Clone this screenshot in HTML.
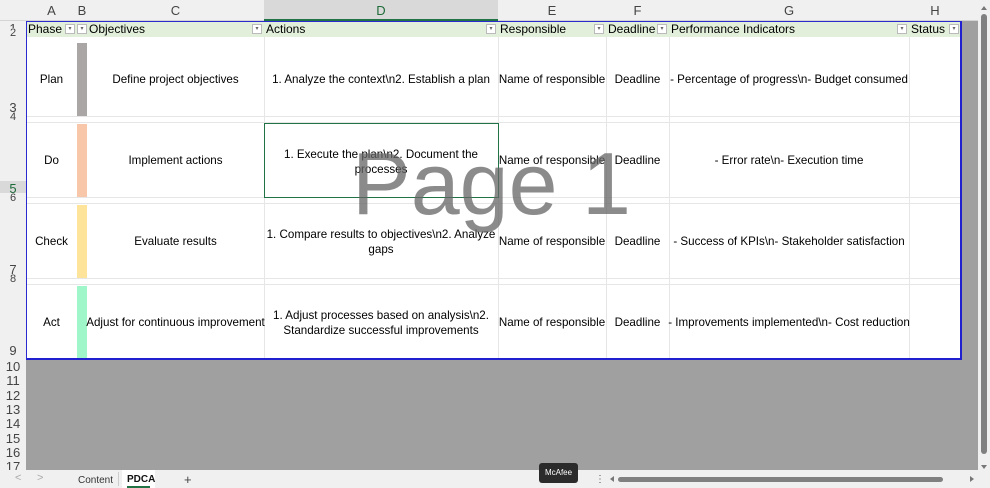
<!DOCTYPE html>
<html><head><meta charset="utf-8"><style>
*{margin:0;padding:0;box-sizing:border-box}
body{width:990px;height:488px;overflow:hidden;background:#fff;font-family:"Liberation Sans",Arial,sans-serif;font-size:12px;color:#000;position:relative}
.a{position:absolute}
.ch{top:0;height:21px;background:#f0f0f0;border-bottom:1px solid #d4d4d4;color:#444;font-size:13px;text-align:center;line-height:22px}
.rh{left:0;width:26px;color:#444;font-size:13px;text-align:center;background:#f0f0f0}
.hd{top:21px;height:16px;background:#e2efda;line-height:16px;font-size:12px;padding-left:2px;white-space:nowrap;overflow:hidden}
.dd{position:absolute;right:2px;top:3px;width:10px;height:10px;border:1px solid #bbb;background:#fff;font-size:6px;line-height:8px;text-align:center;color:#666}
.c{display:flex;align-items:center;justify-content:center;text-align:center;line-height:15px;font-size:11.6px;white-space:nowrap}
.vl{top:37px;height:322px;width:1px;background:#e6e6e6}
.hl{left:26px;width:935px;height:1px;background:#e6e6e6}
</style></head><body>
<div class="a ch" style="left:0;width:990px"></div>
<div class="a ch" style="left:26px;width:51px">A</div>
<div class="a ch" style="left:77px;width:10px">B</div>
<div class="a ch" style="left:87px;width:177px">C</div>
<div class="a ch" style="left:264px;width:234px;background:#d9d9d9;color:#1e6b3a;border-bottom:2px solid #217346">D</div>
<div class="a ch" style="left:498px;width:108px">E</div>
<div class="a ch" style="left:606px;width:63px">F</div>
<div class="a ch" style="left:669px;width:240px">G</div>
<div class="a ch" style="left:909px;width:52px">H</div>
<div class="a rh" style="top:21px;height:448px"></div>
<div class="a rh" style="top:21px;height:16px;line-height:16px">1</div>
<div class="a rh" style="top:28px;height:10px;line-height:10px;font-size:11px;overflow:hidden">2</div>
<div class="a rh" style="top:100px;height:16px;line-height:16px">3</div>
<div class="a rh" style="top:112px;height:10px;line-height:10px;font-size:11px;overflow:hidden">4</div>
<div class="a rh" style="top:181px;height:16px;line-height:16px;background:#d9d9d9;color:#1e6b3a">5</div>
<div class="a rh" style="top:193px;height:10px;line-height:10px;font-size:11px;overflow:hidden">6</div>
<div class="a rh" style="top:262px;height:16px;line-height:16px">7</div>
<div class="a rh" style="top:274px;height:10px;line-height:10px;font-size:11px;overflow:hidden">8</div>
<div class="a rh" style="top:343px;height:16px;line-height:16px">9</div>
<div class="a rh" style="top:360px;height:14px;line-height:14px">10</div>
<div class="a rh" style="top:374px;height:14px;line-height:14px">11</div>
<div class="a rh" style="top:389px;height:14px;line-height:14px">12</div>
<div class="a rh" style="top:403px;height:14px;line-height:14px">13</div>
<div class="a rh" style="top:417px;height:14px;line-height:14px">14</div>
<div class="a rh" style="top:432px;height:14px;line-height:14px">15</div>
<div class="a rh" style="top:446px;height:14px;line-height:14px">16</div>
<div class="a rh" style="top:460px;height:10px;line-height:14px;overflow:hidden">17</div>
<div class="a" style="left:26px;top:360px;width:952px;height:110px;background:#a0a0a0"></div>
<div class="a" style="left:961px;top:21px;width:17px;height:340px;background:#a0a0a0"></div>
<div class="a hd" style="left:26px;width:51px">Phase<span class="dd">▾</span></div>
<div class="a hd" style="left:77px;width:10px"><span class="dd" style="right:0">▾</span></div>
<div class="a hd" style="left:87px;width:177px">Objectives<span class="dd">▾</span></div>
<div class="a hd" style="left:264px;width:234px">Actions<span class="dd">▾</span></div>
<div class="a hd" style="left:498px;width:108px">Responsible<span class="dd">▾</span></div>
<div class="a hd" style="left:606px;width:63px">Deadline<span class="dd">▾</span></div>
<div class="a hd" style="left:669px;width:240px">Performance Indicators<span class="dd">▾</span></div>
<div class="a hd" style="left:909px;width:52px">Status<span class="dd">▾</span></div>
<div class="a vl" style="left:264px"></div>
<div class="a vl" style="left:498px"></div>
<div class="a vl" style="left:606px"></div>
<div class="a vl" style="left:669px"></div>
<div class="a vl" style="left:909px"></div>
<div class="a hl" style="top:116px"></div><div class="a hl" style="top:122px"></div>
<div class="a hl" style="top:197px"></div><div class="a hl" style="top:203px"></div>
<div class="a hl" style="top:278px"></div><div class="a hl" style="top:284px"></div>
<div class="a" style="left:77px;top:43px;width:10px;height:73px;background:#aaa6a6"></div>
<div class="a" style="left:77px;top:124px;width:10px;height:73px;background:#f8c6a8"></div>
<div class="a" style="left:77px;top:205px;width:10px;height:73px;background:#fde49a"></div>
<div class="a" style="left:77px;top:286px;width:10px;height:73px;background:#9ff7c9"></div>

<div class="a c" style="left:26px;top:43px;width:51px;height:73px">Plan</div>
<div class="a c" style="left:87px;top:43px;width:177px;height:73px">Define project objectives</div>
<div class="a c" style="left:264px;top:43px;width:234px;height:73px">1. Analyze the context\n2. Establish a plan</div>
<div class="a c" style="left:498px;top:43px;width:108px;height:73px">Name of responsible</div>
<div class="a c" style="left:606px;top:43px;width:63px;height:73px">Deadline</div>
<div class="a c" style="left:669px;top:43px;width:240px;height:73px">- Percentage of progress\n- Budget consumed</div>

<div class="a c" style="left:26px;top:124px;width:51px;height:73px">Do</div>
<div class="a c" style="left:87px;top:124px;width:177px;height:73px">Implement actions</div>
<div class="a c" style="left:264px;top:124px;width:234px;height:73px;align-items:flex-start;padding-top:23px">1. Execute the plan\n2. Document the<br>processes</div>
<div class="a c" style="left:498px;top:124px;width:108px;height:73px">Name of responsible</div>
<div class="a c" style="left:606px;top:124px;width:63px;height:73px">Deadline</div>
<div class="a c" style="left:669px;top:124px;width:240px;height:73px">- Error rate\n- Execution time</div>

<div class="a c" style="left:26px;top:205px;width:51px;height:73px">Check</div>
<div class="a c" style="left:87px;top:205px;width:177px;height:73px">Evaluate results</div>
<div class="a c" style="left:264px;top:205px;width:234px;height:73px">1. Compare results to objectives\n2. Analyze<br>gaps</div>
<div class="a c" style="left:498px;top:205px;width:108px;height:73px">Name of responsible</div>
<div class="a c" style="left:606px;top:205px;width:63px;height:73px">Deadline</div>
<div class="a c" style="left:669px;top:205px;width:240px;height:73px">- Success of KPIs\n- Stakeholder satisfaction</div>

<div class="a c" style="left:26px;top:286px;width:51px;height:73px">Act</div>
<div class="a c" style="left:87px;top:286px;width:177px;height:73px">Adjust for continuous improvement</div>
<div class="a c" style="left:264px;top:286px;width:234px;height:73px">1. Adjust processes based on analysis\n2.<br>Standardize successful improvements</div>
<div class="a c" style="left:498px;top:286px;width:108px;height:73px">Name of responsible</div>
<div class="a c" style="left:606px;top:286px;width:63px;height:73px">Deadline</div>
<div class="a c" style="left:669px;top:286px;width:240px;height:73px">- Improvements implemented\n- Cost reduction</div>

<div class="a" style="left:264px;top:123px;width:235px;height:75px;border:1px solid #217346"></div>
<div class="a" style="left:26px;top:21px;width:936px;height:339px;border:1px solid #2a2ad0;border-bottom:2px solid #2020d0;border-right:2px solid #2020d0"></div>
<div class="a" style="left:352px;top:134px;font-size:88px;line-height:100px;color:rgba(100,100,100,0.75);white-space:nowrap">Page 1</div>
<div class="a" style="left:978px;top:0;width:12px;height:470px;background:#f0f0f0"></div>
<div class="a" style="left:981px;top:6px;width:0;height:0;border-left:3px solid transparent;border-right:3px solid transparent;border-bottom:4px solid #777"></div>
<div class="a" style="left:981px;top:14px;width:6px;height:440px;background:#808080;border-radius:3px"></div>
<div class="a" style="left:981px;top:465px;width:0;height:0;border-left:3px solid transparent;border-right:3px solid transparent;border-top:4px solid #777"></div>
<div class="a" style="left:0;top:470px;width:990px;height:18px;background:#f0f0f0"></div>
<div class="a" style="left:15px;top:472px;color:#aaa;font-size:11px">&lt;</div>
<div class="a" style="left:37px;top:472px;color:#aaa;font-size:11px">&gt;</div>
<div class="a" style="left:78px;top:475px;color:#333;font-size:10px">Content</div>
<div class="a" style="left:118px;top:472px;width:1px;height:14px;background:#ccc"></div>
<div class="a" style="left:122px;top:470px;width:33px;height:18px;background:#fff"></div>
<div class="a" style="left:127px;top:474px;color:#111;font-size:10px;font-weight:bold">PDCA</div>
<div class="a" style="left:127px;top:486px;width:23px;height:2px;background:#217346"></div>
<div class="a" style="left:184px;top:472px;color:#444;font-size:13px">+</div>
<div class="a" style="left:539px;top:463px;width:39px;height:20px;background:#2b2b2b;border-radius:3px;color:#fff;font-size:8px;line-height:20px;text-align:center">McAfee</div>
<div class="a" style="left:595px;top:474px;color:#555;font-size:10px">⋮</div>
<div class="a" style="left:610px;top:476px;width:0;height:0;border-top:3px solid transparent;border-bottom:3px solid transparent;border-right:4px solid #777"></div>
<div class="a" style="left:618px;top:477px;width:325px;height:5px;background:#808080;border-radius:3px"></div>
<div class="a" style="left:970px;top:476px;width:0;height:0;border-top:3px solid transparent;border-bottom:3px solid transparent;border-left:4px solid #777"></div>
</body></html>
